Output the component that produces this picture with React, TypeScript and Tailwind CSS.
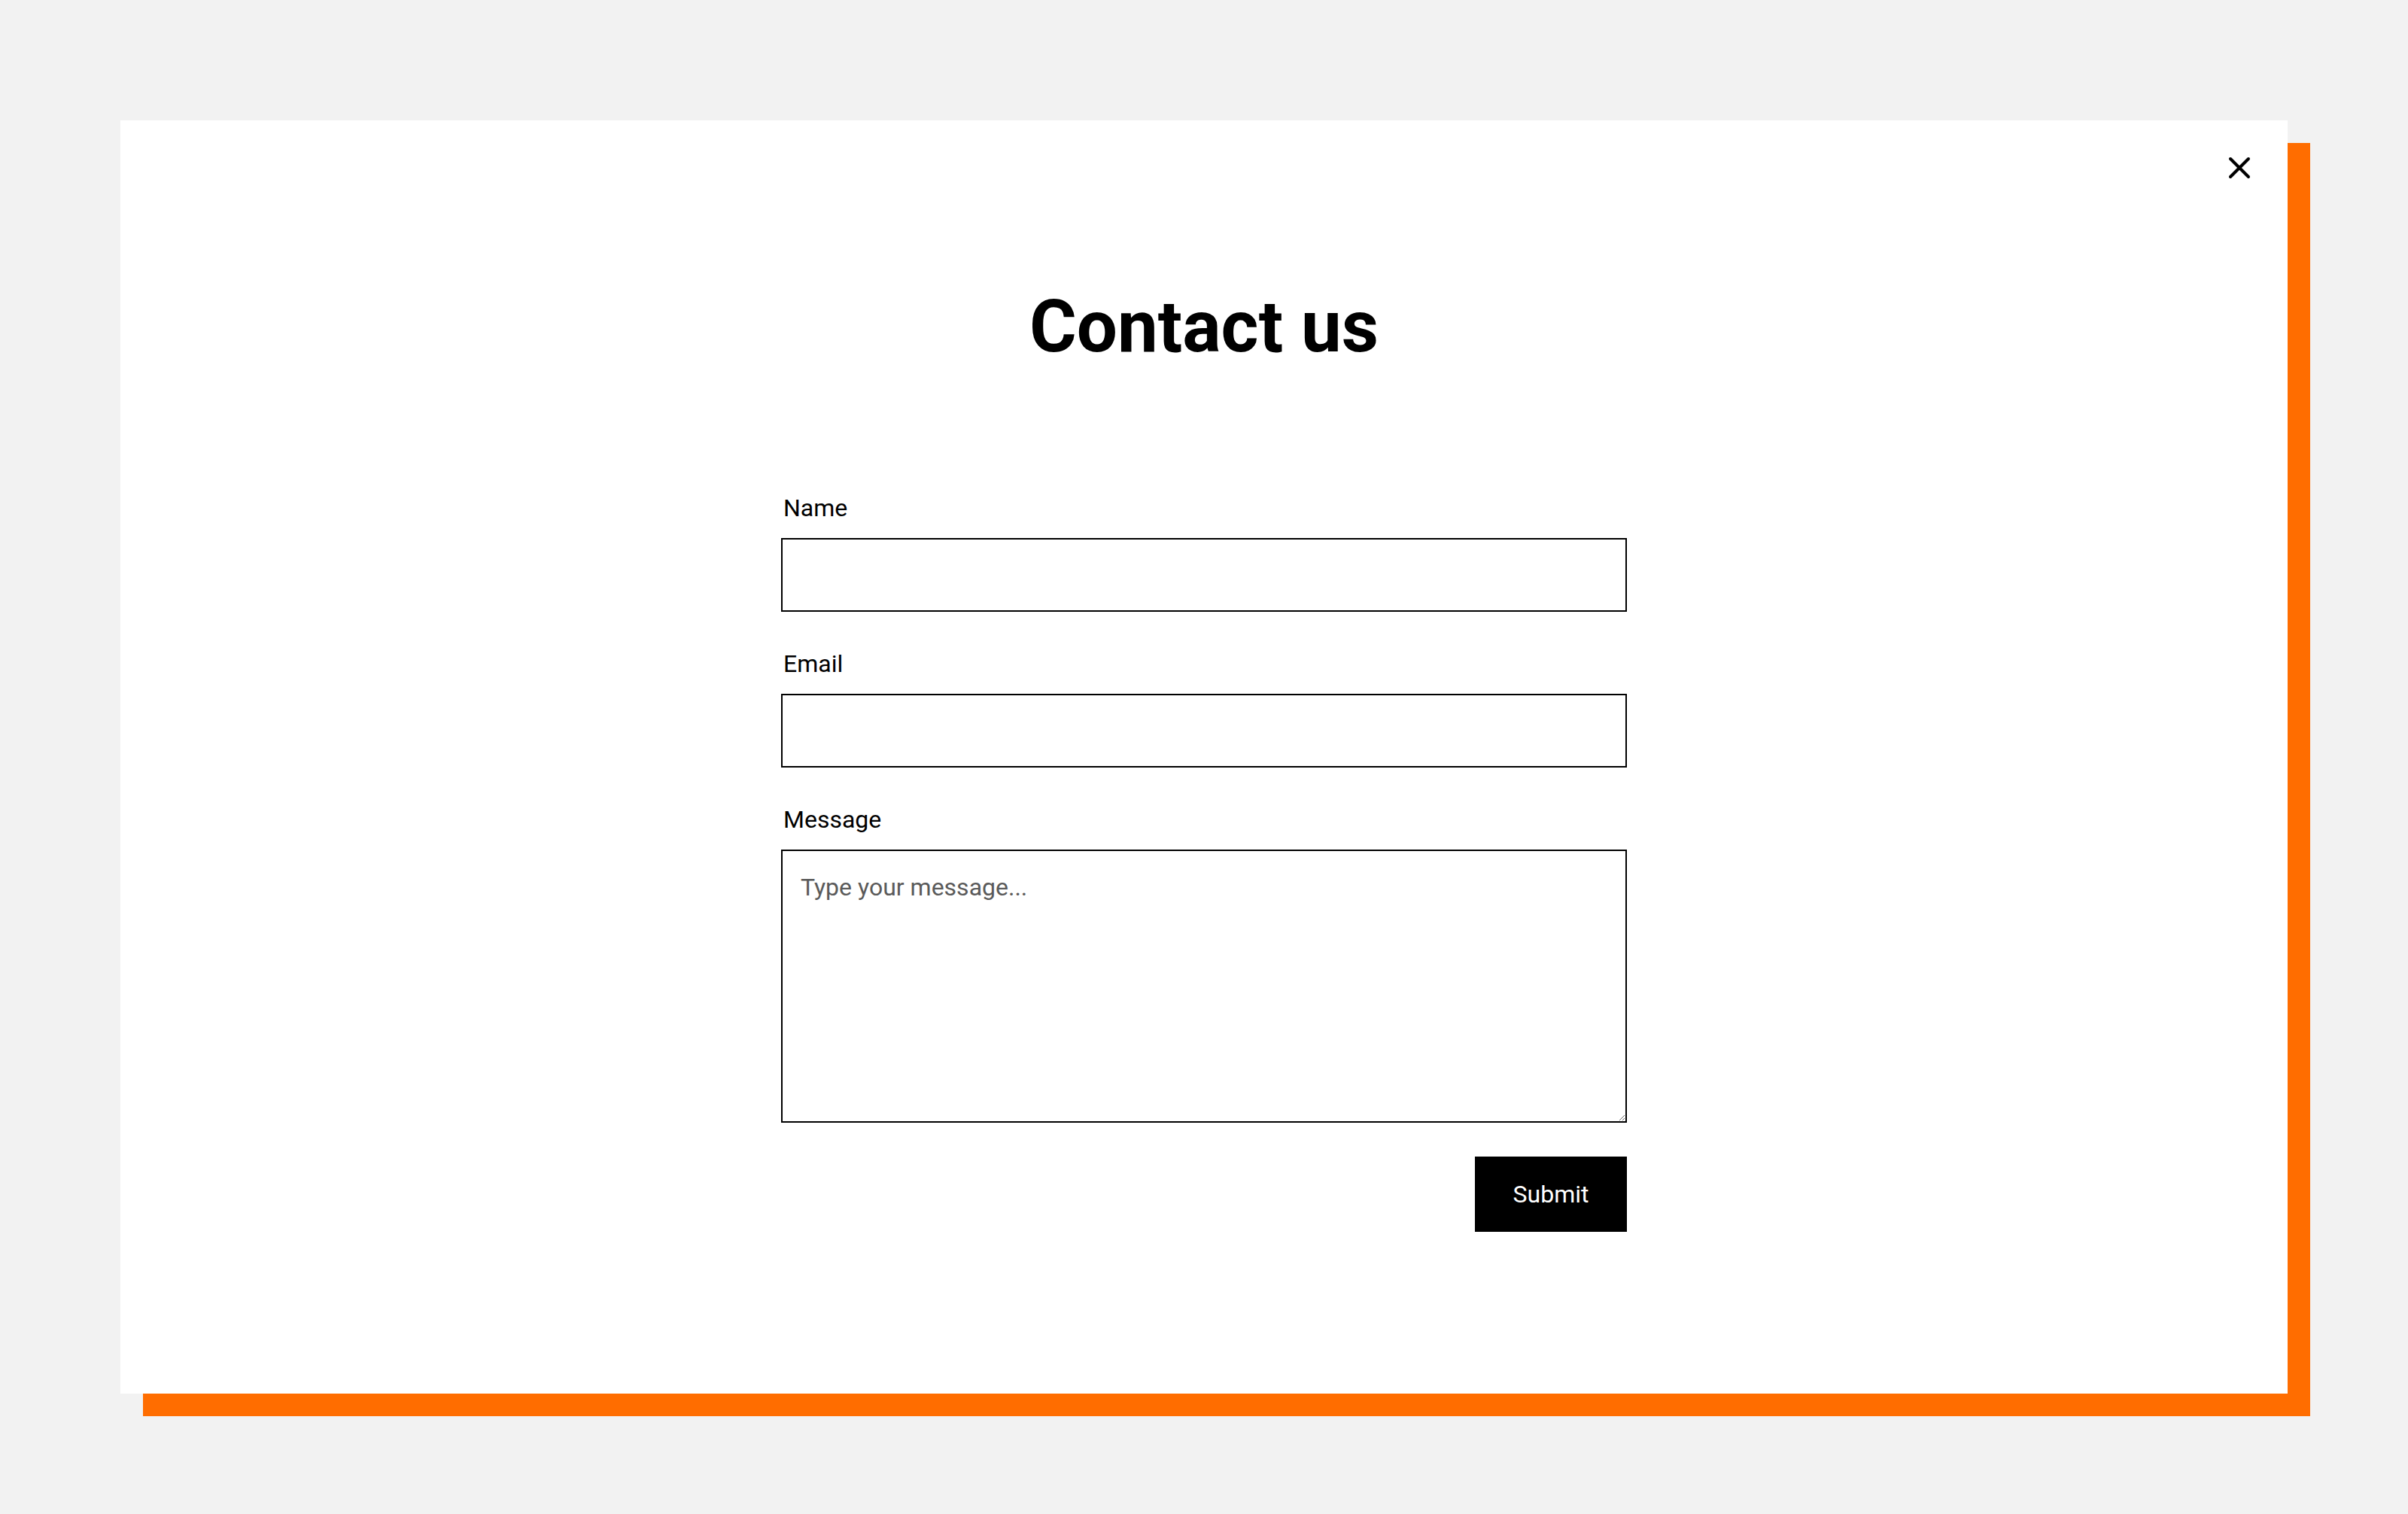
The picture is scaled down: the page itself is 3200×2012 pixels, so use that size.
import React, { useState } from 'react';
import { X } from 'lucide-react';

const fieldClass =
  "block w-full border-2 border-black bg-white px-6 text-[32px] text-black outline-none";

const labelClass = "mb-[21px] block pl-[3px] text-[32px] leading-[38px] text-black";

const App: React.FC = () => {
  const [name, setName] = useState('');
  const [email, setEmail] = useState('');
  const [message, setMessage] = useState('');

  return (
    <div
      className="min-h-screen bg-[#f2f2f2] p-[160px]"
      style={{ fontFamily: 'Roboto, "Liberation Sans", Arial, sans-serif' }}
    >
      <div className="relative bg-white pt-[218px] pb-[215px] shadow-[30px_30px_0_#ff6d00]">
        <button
          type="button"
          title="Close"
          className="absolute top-[39px] right-[40px] text-black"
        >
          <X size={48} strokeWidth={2} />
        </button>

        <h1 className="text-center text-[96px] font-bold leading-[112px] text-black">
          Contact us
        </h1>

        <form
          className="mx-auto mt-[166px] w-[1124px]"
          onSubmit={(e) => e.preventDefault()}
        >
          <div className="mb-[50px]">
            <label className={labelClass}>Name</label>
            <input
              type="text"
              value={name}
              onChange={(e) => setName(e.target.value)}
              className={`${fieldClass} h-[98px]`}
            />
          </div>

          <div className="mb-[50px]">
            <label className={labelClass}>Email</label>
            <input
              type="email"
              value={email}
              onChange={(e) => setEmail(e.target.value)}
              className={`${fieldClass} h-[98px]`}
            />
          </div>

          <div className="mb-[45px]">
            <label className={labelClass}>Message</label>
            <textarea
              value={message}
              onChange={(e) => setMessage(e.target.value)}
              placeholder="Type your message..."
              className={`${fieldClass} h-[363px] resize pt-[29px] pb-[24px] leading-[38px] placeholder:text-[#5a5a5a]`}
            />
          </div>

          <div className="flex justify-end">
            <button
              type="submit"
              className="h-[100px] w-[202px] bg-black text-[32px] text-white"
            >
              Submit
            </button>
          </div>
        </form>
      </div>
    </div>
  );
};

export default App;
